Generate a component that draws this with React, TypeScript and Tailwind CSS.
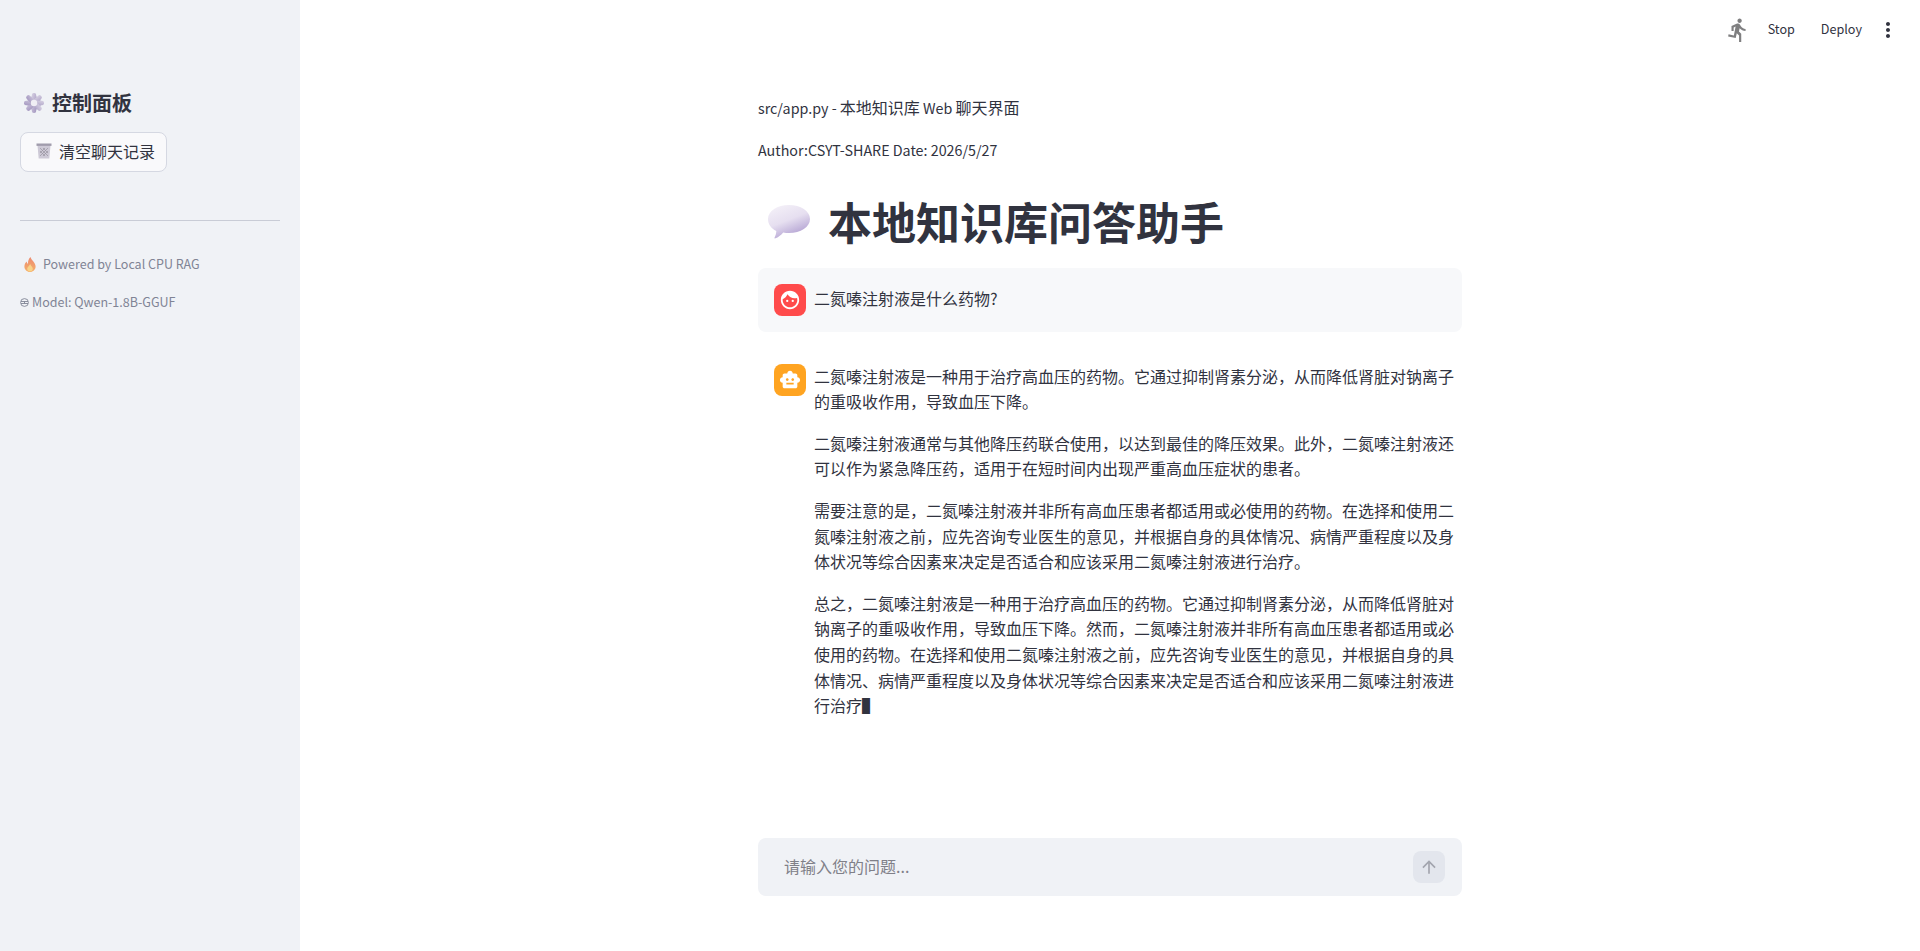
// App.tsx
import { MdArrowUpward, MdDirectionsRun, MdFace, MdMoreVert, MdSmartToy } from "react-icons/md";

const FONT = "font-['Noto_Sans_CJK_SC','Noto_Sans',sans-serif]";

const GearEmoji = () => (
  <svg width="20" height="20" viewBox="0 0 20 20">
    <defs>
      <linearGradient id="gear" x1="0" y1="0" x2="1" y2="1">
        <stop offset="0" stopColor="#d6d0e2" />
        <stop offset="1" stopColor="#a497c0" />
      </linearGradient>
    </defs>
    <g fill="url(#gear)">
      <circle cx="10" cy="10" r="7" />
      <rect x="7.800" y="0" width="4.400" height="20" rx="2" />
      <rect x="7.800" y="0" width="4.400" height="20" rx="2" transform="rotate(45 10 10)" />
      <rect x="7.800" y="0" width="4.400" height="20" rx="2" transform="rotate(90 10 10)" />
      <rect x="7.800" y="0" width="4.400" height="20" rx="2" transform="rotate(135 10 10)" />
    </g>
    <circle cx="10" cy="10" r="3.200" fill="#f0eef4" />
  </svg>
);

const TrashEmoji = () => (
  <svg width="16" height="16" viewBox="0 0 16 16">
    <path d="M1.500 2.500h13l-1.200 13H2.700z" fill="#cdc9d6" />
    <rect x="0.500" y="0.500" width="15" height="2.400" fill="#a09cac" />
    <path d="M4 5l8 8M7 5l5 5M4 8l5 5M12 5l-8 8M9 5l-5 5M12 8l-5 5" stroke="#98949f" strokeWidth="0.7" />
  </svg>
);

const FireEmoji = () => (
  <svg width="12" height="15" viewBox="0 0 12 15">
    <defs>
      <linearGradient id="fire" x1="0" y1="0" x2="0" y2="1">
        <stop offset="0" stopColor="#ec8a70" />
        <stop offset="1" stopColor="#f5b06a" />
      </linearGradient>
    </defs>
    <path d="M6.500 0C7 3 11.600 5.400 11.600 9.500 11.600 12.600 9 15 6 15S.4 12.600.4 9.500C.4 7.400 1.500 5.800 2.600 4.600c.2 1.200.7 1.900 1.400 2.200C3.800 4.200 4.800 1.600 6.500 0z" fill="url(#fire)" />
    <path d="M6.200 7C6.600 8.600 8.800 9.800 8.800 11.800 8.800 13.500 7.500 14.600 6 14.600S3.200 13.500 3.200 11.800C3.200 10 5.400 9 6.200 7z" fill="#f8d38a" />
  </svg>
);

const BalloonEmoji = () => (
  <svg width="44" height="36" viewBox="0 0 44 34" preserveAspectRatio="none">
    <defs>
      <linearGradient id="balloon" x1="0" y1="0" x2="0.5" y2="1">
        <stop offset="0" stopColor="#f6f3f9" />
        <stop offset="0.55" stopColor="#e6dff0" />
        <stop offset="1" stopColor="#b3a2d2" />
      </linearGradient>
    </defs>
    <path
      d="M22 1c11.600 0 21 5.600 21 13.200S33.600 27.400 22 27.400c-2 0-4-.2-5.800-.5C14 29.400 11 31.500 8.500 32.400c-.9.300-1.300-.4-.8-1.100.9-1.400 1.500-3.200 1.600-5.700C4.100 23.200 1 19.100 1 14.200 1 6.600 10.400 1 22 1z"
      fill="url(#balloon)"
    />
  </svg>
);

const ModelIcon = () => (
  <svg width="9" height="9" viewBox="0 0 9 9" fill="none" stroke="#808495" strokeWidth="0.9">
    <circle cx="4.500" cy="4.500" r="3.900" />
    <path d="M1 3.500h7M1 5.500h7M4.500 3.500v2" />
  </svg>
);

const paragraphs = [
  "二氮嗪注射液是一种用于治疗高血压的药物。它通过抑制肾素分泌，从而降低肾脏对钠离子的重吸收作用，导致血压下降。",
  "二氮嗪注射液通常与其他降压药联合使用，以达到最佳的降压效果。此外，二氮嗪注射液还可以作为紧急降压药，适用于在短时间内出现严重高血压症状的患者。",
  "需要注意的是，二氮嗪注射液并非所有高血压患者都适用或必使用的药物。在选择和使用二氮嗪注射液之前，应先咨询专业医生的意见，并根据自身的具体情况、病情严重程度以及身体状况等综合因素来决定是否适合和应该采用二氮嗪注射液进行治疗。",
  "总之，二氮嗪注射液是一种用于治疗高血压的药物。它通过抑制肾素分泌，从而降低肾脏对钠离子的重吸收作用，导致血压下降。然而，二氮嗪注射液并非所有高血压患者都适用或必使用的药物。在选择和使用二氮嗪注射液之前，应先咨询专业医生的意见，并根据自身的具体情况、病情严重程度以及身体状况等综合因素来决定是否适合和应该采用二氮嗪注射液进行治疗▌",
];

export default function App() {
  return (
    <div className={`flex h-screen overflow-hidden bg-white text-[#31333f] ${FONT}`}>
      <aside className="w-[300px] shrink-0 bg-[#f0f2f6] px-5 pt-[88px]">
        <h2 className="flex h-[30px] items-center gap-2 pl-1 text-xl font-bold">
          <GearEmoji />
          控制面板
        </h2>
        <button className="mt-[14px] flex h-10 w-[147px] items-center gap-[7px] rounded-lg border border-[#d5d8e2] bg-[#f9f9fb] pb-[2px] pl-[15px] text-base">
          <TrashEmoji />
          清空聊天记录
        </button>
        <hr className="mt-12 border-[#c9ccd6]" />
        <p className="mt-[32px] flex h-[22px] items-center gap-[7px] pl-[4px] text-[12.5px] text-[#808495]">
          <FireEmoji />
          Powered by Local CPU RAG
        </p>
        <p className="mt-4 flex h-[22px] items-center gap-[3px] text-[12.5px] text-[#808495]">
          <ModelIcon />
          Model: Qwen-1.8B-GGUF
        </p>
      </aside>

      <main className="flex min-w-0 flex-1 flex-col">
        <header className="flex h-[60px] shrink-0 items-center justify-end text-[12.6px]">
          <MdDirectionsRun className="text-[26px] text-[#7f7f80]" />
          <span className="ml-[17px] pb-[2px]">Stop</span>
          <span className="ml-[26px] pb-[2px]">Deploy</span>
          <MdMoreVert className="ml-[14px] mr-5 text-[24px]" />
        </header>

        <div className="mx-auto flex w-[704px] flex-1 flex-col text-base leading-[25.6px]">
          <p className="mt-[35px]">
            <span className="text-[14.3px]">src/app.py - </span>本地知识库
            <span className="text-[14.3px]"> Web </span>聊天界面
          </p>
          <p className="mt-4 text-[14.3px]">Author:CSYT-SHARE Date: 2026/5/27</p>

          <h1 className="mt-[32px] flex h-[56px] items-center gap-[17px] pl-[9px] text-[44px] font-bold">
            <BalloonEmoji />
            本地知识库问答助手
          </h1>

          <div className="mt-[17.5px] flex h-16 items-center gap-2 rounded-lg bg-[#f7f8fa] px-4">
            <div className="flex h-8 w-8 shrink-0 items-center justify-center rounded-lg bg-[#ff4b4b]">
              <MdFace className="text-[22px] text-white" />
            </div>
            <p className="pb-[2px]">二氮嗪注射液是什么药物?</p>
          </div>

          <div className="mt-8 flex gap-2 pl-4 pr-2">
            <div className="flex h-8 w-8 shrink-0 items-center justify-center rounded-lg bg-[#ffa421]">
              <MdSmartToy className="text-[22px] text-white" />
            </div>
            <div className="flex flex-col gap-4">
              {paragraphs.map((text, i) => (
                <p key={i}>{text}</p>
              ))}
            </div>
          </div>

          <div className="mt-auto mb-[55px] flex h-[58px] items-center rounded-lg bg-[#f0f2f6] pl-[26px] pr-[17px]">
            <input
              placeholder="请输入您的问题..."
              className="flex-1 bg-transparent pb-[2px] text-base outline-none placeholder:text-[#808088]"
            />
            <div className="flex h-8 w-8 items-center justify-center rounded-lg bg-[#e3e6ed]">
              <MdArrowUpward className="text-[20px] text-[#a3a5ae]" />
            </div>
          </div>
        </div>
      </main>
    </div>
  );
}
